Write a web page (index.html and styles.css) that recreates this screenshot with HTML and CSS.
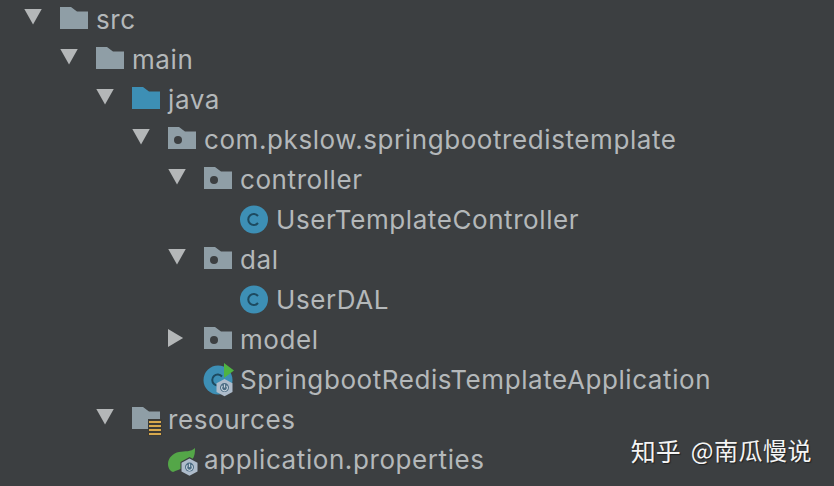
FILE: index.html
```html
<!DOCTYPE html>
<html lang="en">
  <head>
    <meta charset="UTF-8" />
    <meta name="viewport" content="width=device-width, initial-scale=1.0" />
    <title>Project tree</title>
    <link rel="stylesheet" href="styles.css">
  </head>
  <body>
    <svg class="defs" width="0" height="0">
      <defs>
        <path id="folder" d="M0 22V0h11l6 4.500h11V22z" />
        <g id="hex">
          <path d="M8.500 0l8 4.300v8.600l-8 4.300-8-4.300V4.300z" fill="#aebccb" />
          <circle cx="8.500" cy="8.600" r="4.500" fill="#4b6b82" />
          <path d="M6.500 6.800a2.900 2.900 0 1 0 4 0" fill="none" stroke="#c6d2dc" stroke-width="1.200" />
          <path d="M8.500 5.200v3.400" stroke="#c6d2dc" stroke-width="1.200" />
        </g>
      </defs>
    </svg>

    <ul class="tree">
      <li class="row d0">
        <span class="arrow down"></span>
        <svg class="icon" viewBox="0 0 28 28"><use href="#folder" y="1" fill="#8f9ea6" /></svg>
        <span class="label">src</span>
      </li>
      <li class="row d1">
        <span class="arrow down"></span>
        <svg class="icon" viewBox="0 0 28 28"><use href="#folder" y="1" fill="#8f9ea6" /></svg>
        <span class="label">main</span>
      </li>
      <li class="row d2">
        <span class="arrow down"></span>
        <svg class="icon" viewBox="0 0 28 28"><use href="#folder" y="1" fill="#3d8fb5" /></svg>
        <span class="label">java</span>
      </li>
      <li class="row d3">
        <span class="arrow down"></span>
        <svg class="icon" viewBox="0 0 28 28"><use href="#folder" y="1" fill="#8f9ea6" /><circle cx="10" cy="14" r="4" fill="#3c3f41" /></svg>
        <span class="label">com.pkslow.springbootredistemplate</span>
      </li>
      <li class="row d4">
        <span class="arrow down"></span>
        <svg class="icon" viewBox="0 0 28 28"><use href="#folder" y="1" fill="#8f9ea6" /><circle cx="10" cy="14" r="4" fill="#3c3f41" /></svg>
        <span class="label">controller</span>
      </li>
      <li class="row d5">
        <span class="arrow none"></span>
        <svg class="icon" viewBox="0 0 28 28"><circle cx="14" cy="13.500" r="14" fill="#3d8fb5" /><path d="M18 10a5.500 5.500 0 1 0 0 7" fill="none" stroke="#1d4a60" stroke-width="2" /></svg>
        <span class="label">UserTemplateController</span>
      </li>
      <li class="row d4">
        <span class="arrow down"></span>
        <svg class="icon" viewBox="0 0 28 28"><use href="#folder" y="1" fill="#8f9ea6" /><circle cx="10" cy="14" r="4" fill="#3c3f41" /></svg>
        <span class="label">dal</span>
      </li>
      <li class="row d5">
        <span class="arrow none"></span>
        <svg class="icon" viewBox="0 0 28 28"><circle cx="14" cy="13.500" r="14" fill="#3d8fb5" /><path d="M18 10a5.500 5.500 0 1 0 0 7" fill="none" stroke="#1d4a60" stroke-width="2" /></svg>
        <span class="label">UserDAL</span>
      </li>
      <li class="row d4">
        <span class="arrow right"></span>
        <svg class="icon" viewBox="0 0 28 28"><use href="#folder" y="1" fill="#8f9ea6" /><circle cx="10" cy="14" r="4" fill="#3c3f41" /></svg>
        <span class="label">model</span>
      </li>
      <li class="row d4">
        <span class="arrow none"></span>
        <svg class="icon" viewBox="0 0 28 28"><circle cx="14" cy="14" r="14.500" fill="#3d8fb5" /><path d="M18 10.500a5.500 5.500 0 1 0 0 7" fill="none" stroke="#1d4a60" stroke-width="2" /><path d="M20 -3l10 7.500-10 7.500z" fill="#4fb342" /><use href="#hex" x="12" y="13" /></svg>
        <span class="label">SpringbootRedisTemplateApplication</span>
      </li>
      <li class="row d2">
        <span class="arrow down"></span>
        <svg class="icon" viewBox="0 0 28 28"><use href="#folder" y="1" fill="#8f9ea6" /><rect x="16" y="13" width="14" height="17" fill="#3b3a36" /><path d="M17 16h12M17 20h12M17 24h12M17 28h12" stroke="#d6a84e" stroke-width="2.200" /></svg>
        <span class="label">resources</span>
      </li>
      <li class="row d3">
        <span class="arrow none"></span>
        <svg class="icon" viewBox="0 0 28 28"><path d="M27 2c0 4 0 8-3 12-4 6-11 9-19 12-3-1-5-4-5-8 0-6 5-11 11-12 6-1 12 0 16-4z" fill="#54a648" /><path d="M21.500 11l9 5v10l-9 5-9-5V16z" fill="#3c3f41" /><use href="#hex" x="13" y="12.500" /></svg>
        <span class="label">application.properties</span>
      </li>
    </ul>

    <div class="mark">
      <span class="brand">知乎</span>
      <span class="handle">@南瓜慢说</span>
    </div>
  </body>
</html>
```

FILE: styles.css
```css
body {
  margin: 0;
  height: 486px;
  overflow: hidden;
  position: relative;
  background-color: #3c3f41;
  font-family: "Inter", "Liberation Sans", sans-serif;
}

.defs {
  position: absolute;
}

.tree {
  list-style: none;
  margin: 0;
  padding: 0;
}

.row {
  display: flex;
  align-items: center;
  height: 40px;
}

.d0 { padding-left: 24px; }
.d1 { padding-left: 60px; }
.d2 { padding-left: 96px; }
.d3 { padding-left: 132px; }
.d4 { padding-left: 168px; }
.d5 { padding-left: 204px; }

.arrow {
  width: 18px;
  height: 16px;
  margin-right: 18px;
  flex: none;
  margin-top: -7px;
  background-color: #b4b7b8;
}

.arrow.down {
  clip-path: polygon(0 0, 100% 0, 50% 100%);
}

.arrow.right {
  height: 18px;
  clip-path: polygon(0 0, 84% 50%, 0 100%);
  margin-top: -4px;
}

.arrow.none {
  background: none;
}

.icon {
  width: 28px;
  height: 28px;
  margin-right: 8px;
  flex: none;
  overflow: visible;
}

.label {
  font-size: 26px;
  letter-spacing: 0.58px;
  line-height: 32px;
  padding-bottom: 1px;
  color: #b4b8ba;
  white-space: nowrap;
}

.mark {
  position: absolute;
  right: 22px;
  top: 433px;
  display: flex;
  gap: 10px;
  font-family: "Noto Sans CJK SC", sans-serif;
  line-height: 34px;
  color: #f4f4f4;
  text-shadow: 1px 1px 1px rgba(0, 0, 0, 0.5);
  white-space: nowrap;
}

.brand {
  font-size: 25px;
}

.handle {
  font-size: 24px;
  letter-spacing: 0.5px;
}
```
